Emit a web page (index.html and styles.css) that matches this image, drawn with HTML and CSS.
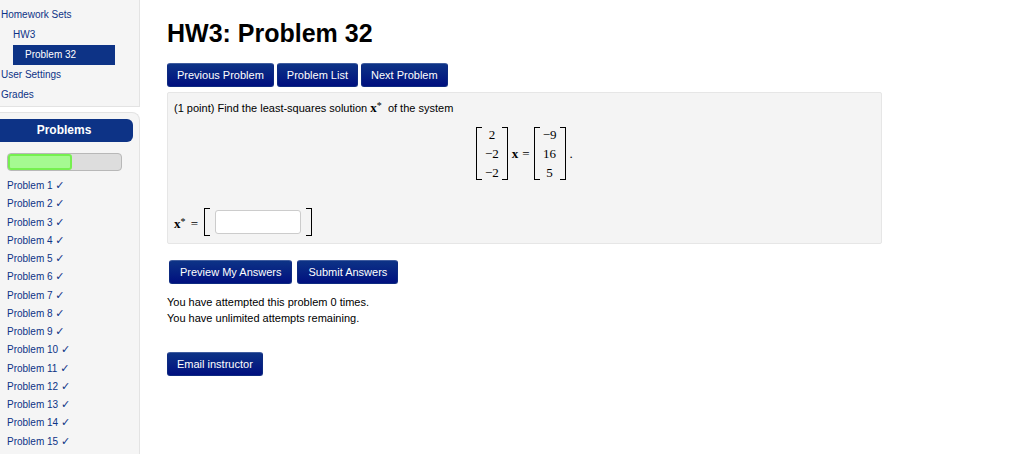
FILE: index.html
```html
<!DOCTYPE html>
<html lang="en">
<head>
    <meta charset="UTF-8">
    <title>HW3: Problem 32</title>
    <link rel="stylesheet" href="styles.css">
</head>
<body>
    <div class="page">
        <!-- sidebar -->
        <div class="sidebar">
            <nav class="site-nav">
                <ul>
                    <li><a href="#">Homework Sets</a></li>
                    <li class="nested"><a href="#">HW3</a></li>
                    <li class="nested"><a class="active" href="#">Problem 32</a></li>
                    <li><a href="#">User Settings</a></li>
                    <li><a href="#">Grades</a></li>
                </ul>
            </nav>

            <div class="problem-nav">
                <h2>Problems</h2>
                <div class="progress"><div class="bar" style="width: 57%"></div></div>
                <ul>
                    <li><a href="#">Problem 1 <span class="check">✓</span></a></li>
                    <li><a href="#">Problem 2 <span class="check">✓</span></a></li>
                    <li><a href="#">Problem 3 <span class="check">✓</span></a></li>
                    <li><a href="#">Problem 4 <span class="check">✓</span></a></li>
                    <li><a href="#">Problem 5 <span class="check">✓</span></a></li>
                    <li><a href="#">Problem 6 <span class="check">✓</span></a></li>
                    <li><a href="#">Problem 7 <span class="check">✓</span></a></li>
                    <li><a href="#">Problem 8 <span class="check">✓</span></a></li>
                    <li><a href="#">Problem 9 <span class="check">✓</span></a></li>
                    <li><a href="#">Problem 10 <span class="check">✓</span></a></li>
                    <li><a href="#">Problem 11 <span class="check">✓</span></a></li>
                    <li><a href="#">Problem 12 <span class="check">✓</span></a></li>
                    <li><a href="#">Problem 13 <span class="check">✓</span></a></li>
                    <li><a href="#">Problem 14 <span class="check">✓</span></a></li>
                    <li><a href="#">Problem 15 <span class="check">✓</span></a></li>
                </ul>
            </div>
        </div>

        <!-- problem -->
        <main class="content">
            <h1>HW3: Problem 32</h1>

            <div class="btn-row">
                <button class="btn" type="button">Previous Problem</button>
                <button class="btn" type="button">Problem List</button>
                <button class="btn" type="button">Next Problem</button>
            </div>

            <form>
                <div class="problem">
                    <p>(1 point) Find the least-squares solution <span class="math"><b>x</b><sup>*</sup></span>&nbsp; of the system</p>

                    <div class="equation math">
                        <div class="matrix">
                            <span>2</span>
                            <span>−2</span>
                            <span>−2</span>
                        </div>
                        <b>x</b>
                        <span>=</span>
                        <div class="matrix">
                            <span>−9</span>
                            <span>16</span>
                            <span>5</span>
                        </div>
                        <span>.</span>
                    </div>

                    <div class="answer">
                        <label class="math" for="answer"><b>x</b><sup>*</sup> =</label>
                        <div class="matrix">
                            <input type="text" id="answer">
                        </div>
                    </div>
                </div>

                <div class="btn-row submit-row">
                    <button class="btn" type="button">Preview My Answers</button>
                    <button class="btn" type="button">Submit Answers</button>
                </div>
            </form>

            <p class="attempts">
                You have attempted this problem 0 times.<br>
                You have unlimited attempts remaining.
            </p>

            <button class="btn" type="button">Email instructor</button>
        </main>
    </div>
</body>
</html>
```
FILE: styles.css
```css
* {
    box-sizing: border-box;
}

body {
    margin: 0;
    font-family: "Liberation Sans", Arial, Helvetica, sans-serif;
    font-size: 11px;
    line-height: 16px;
    color: #000;
    background: #fff;
}

h1, h2, p, ul {
    margin: 0;
    padding: 0;
}

ul {
    list-style: none;
}

a {
    color: #0d3386;
    text-decoration: none;
}

.page {
    display: flex;
    min-height: 100vh;
}

/* sidebar */
.sidebar {
    display: flex;
    flex-direction: column;
    flex: 0 0 140px;
    font-size: 10px;
}

.site-nav {
    padding: 5px 24px 1px 1px;
    background: #f5f5f5;
    border-right: 1px solid #e3e3e3;
    border-bottom: 1px solid #e3e3e3;
}

.site-nav a {
    display: block;
    line-height: 20px;
}

.site-nav .nested {
    padding-left: 12px;
}

.site-nav .active {
    padding-left: 12px;
    color: #fff;
    background: #0d3386;
}

.problem-nav {
    display: flex;
    flex-direction: column;
    flex: 1;
    margin-top: 5px;
    padding: 6px 6px 3px 0;
    background: #f5f5f5;
    border: 1px solid #e3e3e3;
    border-width: 1px 1px 0 0;
    border-radius: 0 8px 0 0;
}

.problem-nav h2 {
    padding-right: 5px;
    font-size: 12px;
    line-height: 23px;
    text-align: center;
    color: #fff;
    background: #0d3386;
    border-radius: 0 6px 6px 0;
}

.progress {
    height: 18px;
    margin: 11px 11px 6px 7px;
    background: #ddd;
    border: 1px solid #b8b8b8;
    border-radius: 4px;
}

.progress .bar {
    height: 100%;
    background: #a5fa91;
    border: 2px solid #76f050;
    border-radius: 3px;
}

.problem-nav ul {
    display: flex;
    flex-direction: column;
    flex: 1;
    padding-left: 7px;
}

.problem-nav li {
    flex: 1;
    line-height: 18px;
}

.check {
    font-family: "DejaVu Sans", sans-serif;
    font-weight: bold;
    font-size: 11px;
    line-height: 1;
}

/* main column */
.content {
    flex: 1;
    padding: 18px 0 0 27px;
}

h1 {
    margin-bottom: 15px;
    font-size: 25px;
    line-height: 30px;
}

.btn-row {
    display: flex;
    gap: 3px;
}

.btn {
    height: 24px;
    padding: 0 9px;
    font-family: inherit;
    font-size: 11px;
    line-height: 16px;
    color: #fff;
    background: linear-gradient(#0d3386, #00107f);
    border: 1px solid #0d2a80;
    border-top-color: #3f5c9f;
    border-radius: 3px;
    cursor: pointer;
}

.problem {
    width: 83.4%;
    margin-top: 5px;
    padding: 7px 6px;
    background: #f4f4f4;
    border: 1px solid #e6e6e6;
    border-radius: 2px;
}

.math {
    font-family: "Liberation Serif", "Times New Roman", serif;
    font-size: 13px;
}

.math sup {
    font-size: 10px;
    line-height: 0;
    vertical-align: 3px;
}

.equation {
    display: flex;
    justify-content: center;
    align-items: center;
    gap: 4px;
    margin-top: 9px;
}

/* square brackets drawn at both ends */
.matrix {
    position: relative;
    display: grid;
    padding: 0 9px;
    line-height: 19px;
    text-align: center;
}

.matrix::before,
.matrix::after {
    content: "";
    position: absolute;
    top: 0;
    bottom: 0;
    width: 5px;
    border: 1px solid #000;
}

.matrix::before {
    left: 0;
    border-right: 0;
}

.matrix::after {
    right: 0;
    border-left: 0;
}

.equation .matrix::before,
.equation .matrix::after {
    top: 2px;
    bottom: 2px;
}

.answer {
    display: flex;
    align-items: center;
    gap: 6px;
    margin-top: 26px;
}

.answer .matrix {
    padding: 2px 11px;
}

.answer label {
    padding-top: 4px;
}

.answer sup {
    margin-right: 2px;
}

.answer input {
    width: 86px;
    height: 24px;
    padding: 2px 4px;
    font-size: 11px;
    background: #fff;
    border: 1px solid #ccc;
    border-radius: 3px;
}

.submit-row {
    gap: 5px;
    padding: 16px 0 0 2px;
}

.submit-row .btn {
    padding: 0 10px;
}

.attempts {
    margin: 10px 0 26px;
}
```
